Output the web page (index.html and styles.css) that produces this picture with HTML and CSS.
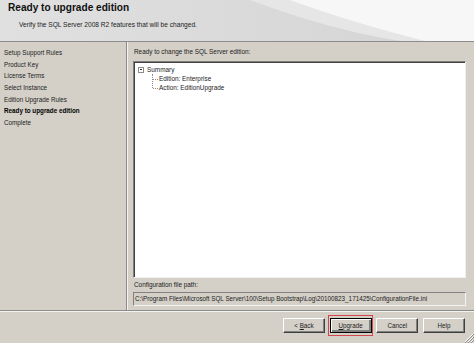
FILE: index.html
```html
<!DOCTYPE html>
<html>
<head>
<meta charset="utf-8">
<link rel="stylesheet" href="styles.css">
</head>
<body>
<div class="dialog">
  <header class="header">
    <svg class="swoosh" width="474" height="41" viewBox="0 0 474 41">
      <defs>
        <linearGradient id="hg" x1="0" y1="0" x2="1" y2="0">
          <stop offset="0" stop-color="#e0e0e0"/>
          <stop offset="0.5" stop-color="#dadada"/>
          <stop offset="1" stop-color="#d4d4d4"/>
        </linearGradient>
      </defs>
      <rect width="474" height="41" fill="url(#hg)"/>
      <path d="M250,0 Q330,30 400,41 L474,41 L474,0 Z" fill="#e6e6e6"/>
      <path d="M290,0 Q350,22 425,41 L474,41 L474,0 Z" fill="#f7f7f7"/>
    </svg>
    <h1 class="title">Ready to upgrade edition</h1>
    <p class="subtitle">Verify the SQL Server 2008 R2 features that will be changed.</p>
  </header>
  <div class="main">
    <nav class="steps">
      <div class="step">Setup Support Rules</div>
      <div class="step">Product Key</div>
      <div class="step">License Terms</div>
      <div class="step">Select Instance</div>
      <div class="step">Edition Upgrade Rules</div>
      <div class="step current">Ready to upgrade edition</div>
      <div class="step">Complete</div>
    </nav>
    <section class="content">
      <div class="label">Ready to change the SQL Server edition:</div>
      <div class="tree">
        <div class="node root"><span class="toggle"></span><span>Summary</span></div>
        <div class="children">
          <div class="node child">Edition: Enterprise</div>
          <div class="node child last">Action: EditionUpgrade</div>
        </div>
      </div>
      <div class="label cfg">Configuration file path:</div>
      <div class="path">C:\Program Files\Microsoft SQL Server\100\Setup Bootstrap\Log\20100823_171425\ConfigurationFile.ini</div>
    </section>
  </div>
  <footer class="footer">
    <button class="btn">&lt; <u>B</u>ack</button>
    <button class="btn default"><u>U</u>pgrade</button>
    <button class="btn">Cancel</button>
    <button class="btn">Help</button>
    <svg class="grip" width="10" height="10" viewBox="0 0 10 10">
      <path d="M9,1 L1,9 M9,4 L4,9 M9,7 L7,9" stroke="#ffffff" stroke-width="1"/>
      <path d="M10,1 L1,10 M10,4 L4,10 M10,7 L7,10" stroke="#8a8a8a" stroke-width="1"/>
    </svg>
  </footer>
</div>
</body>
</html>
```

FILE: styles.css
```css
* { box-sizing: border-box; }
html, body { margin: 0; padding: 0; }
body {
  width: 474px;
  height: 343px;
  overflow: hidden;
  background: #d4d0c8;
  font-family: "Liberation Sans", Arial, sans-serif;
  color: #1c1c1c;
}
.dialog {
  width: 474px;
  height: 343px;
  display: flex;
  flex-direction: column;
}
.header {
  position: relative;
  height: 42px;
  border-bottom: 1px solid #8c8c8c;
  flex: none;
  overflow: hidden;
}
.swoosh {
  position: absolute;
  left: 0;
  top: 0;
}
.title {
  position: relative;
  margin: 0;
  padding: 2px 0 0 8px;
  font-size: 10.1px;
  line-height: 11px;
  font-weight: bold;
  color: #111;
}
.subtitle {
  position: relative;
  margin: 0;
  padding: 8px 0 0 19px;
  font-size: 6.6px;
  line-height: 8px;
  color: #222;
}
.main {
  display: flex;
  height: 269px;
  flex: none;
  border-bottom: 1px solid #8c8c8c;
  box-shadow: 0 1px 0 #f4f3f0;
}
.steps {
  width: 127px;
  flex: none;
  padding: 5px 0 0 4px;
  border-right: 1px solid #8c8c8c;
  box-shadow: 1px 0 0 #f4f3f0;
}
.step {
  font-size: 6.3px;
  line-height: 11.7px;
  height: 11.7px;
  white-space: nowrap;
}
.step.current {
  font-weight: bold;
  color: #000;
}
.content {
  flex: 1;
  padding: 5px 8px 0 6px;
  display: flex;
  flex-direction: column;
}
.label {
  font-size: 6.4px;
  line-height: 10px;
  height: 10px;
  padding-left: 1px;
  white-space: nowrap;
}
.tree {
  margin-top: 4px;
  height: 217px;
  background: #ffffff;
  border-top: 1px solid #808080;
  border-left: 1px solid #808080;
  border-right: 1px solid #f0f0f0;
  border-bottom: 1px solid #f0f0f0;
  box-shadow: inset 1px 1px 0 #404040;
  padding: 3px 0 0 4px;
}
.node {
  font-size: 6.4px;
  line-height: 9px;
  height: 9px;
  white-space: nowrap;
  display: flex;
  align-items: center;
}
.toggle {
  width: 6px;
  height: 6px;
  border: 1px solid #8c8c8c;
  margin-right: 3px;
  position: relative;
  flex: none;
}
.toggle::after {
  content: "";
  position: absolute;
  left: 1px;
  top: 1.5px;
  width: 2px;
  height: 1px;
  background: #333;
}
.children {
  margin-left: 14px;
  border-left: 1px dotted #8c8c8c;
  height: 14px;
}
.node.child {
  padding-left: 6px;
  position: relative;
}
.node.child::before {
  content: "";
  position: absolute;
  left: 0;
  top: 4.5px;
  width: 5px;
  border-top: 1px dotted #8c8c8c;
}
.cfg {
  margin-top: 2px;
}
.path {
  margin-top: 2px;
  height: 14px;
  border-top: 1px solid #808080;
  border-left: 1px solid #808080;
  border-right: 1px solid #f4f3f0;
  border-bottom: 1px solid #f4f3f0;
  font-size: 6.3px;
  line-height: 12px;
  padding-left: 1px;
  white-space: nowrap;
  overflow: hidden;
  color: #222;
}
.footer {
  position: relative;
  flex: 1;
  display: flex;
  justify-content: flex-end;
  align-items: flex-start;
  gap: 4.7px;
  padding: 7px 9px 0 0;
}
.btn {
  position: relative;
  width: 42px;
  height: 15px;
  padding: 0;
  background: #d4d0c8;
  font-family: "Liberation Sans", Arial, sans-serif;
  font-size: 6.3px;
  color: #1c1c1c;
  border-top: 1px solid #ffffff;
  border-left: 1px solid #ffffff;
  border-right: 1px solid #404040;
  border-bottom: 1px solid #404040;
  box-shadow: inset -1px -1px 0 #808080;
}
.btn.default {
  border: 1px solid #000;
  box-shadow: inset 1px 1px 0 #ffffff, inset -2px -2px 0 #808080;
}
.btn.default::after {
  content: "";
  position: absolute;
  left: -3px;
  top: -4px;
  right: -2px;
  bottom: -4px;
  border: 1px solid #d0484c;
}
.grip {
  position: absolute;
  right: 0;
  bottom: 0;
}
```
